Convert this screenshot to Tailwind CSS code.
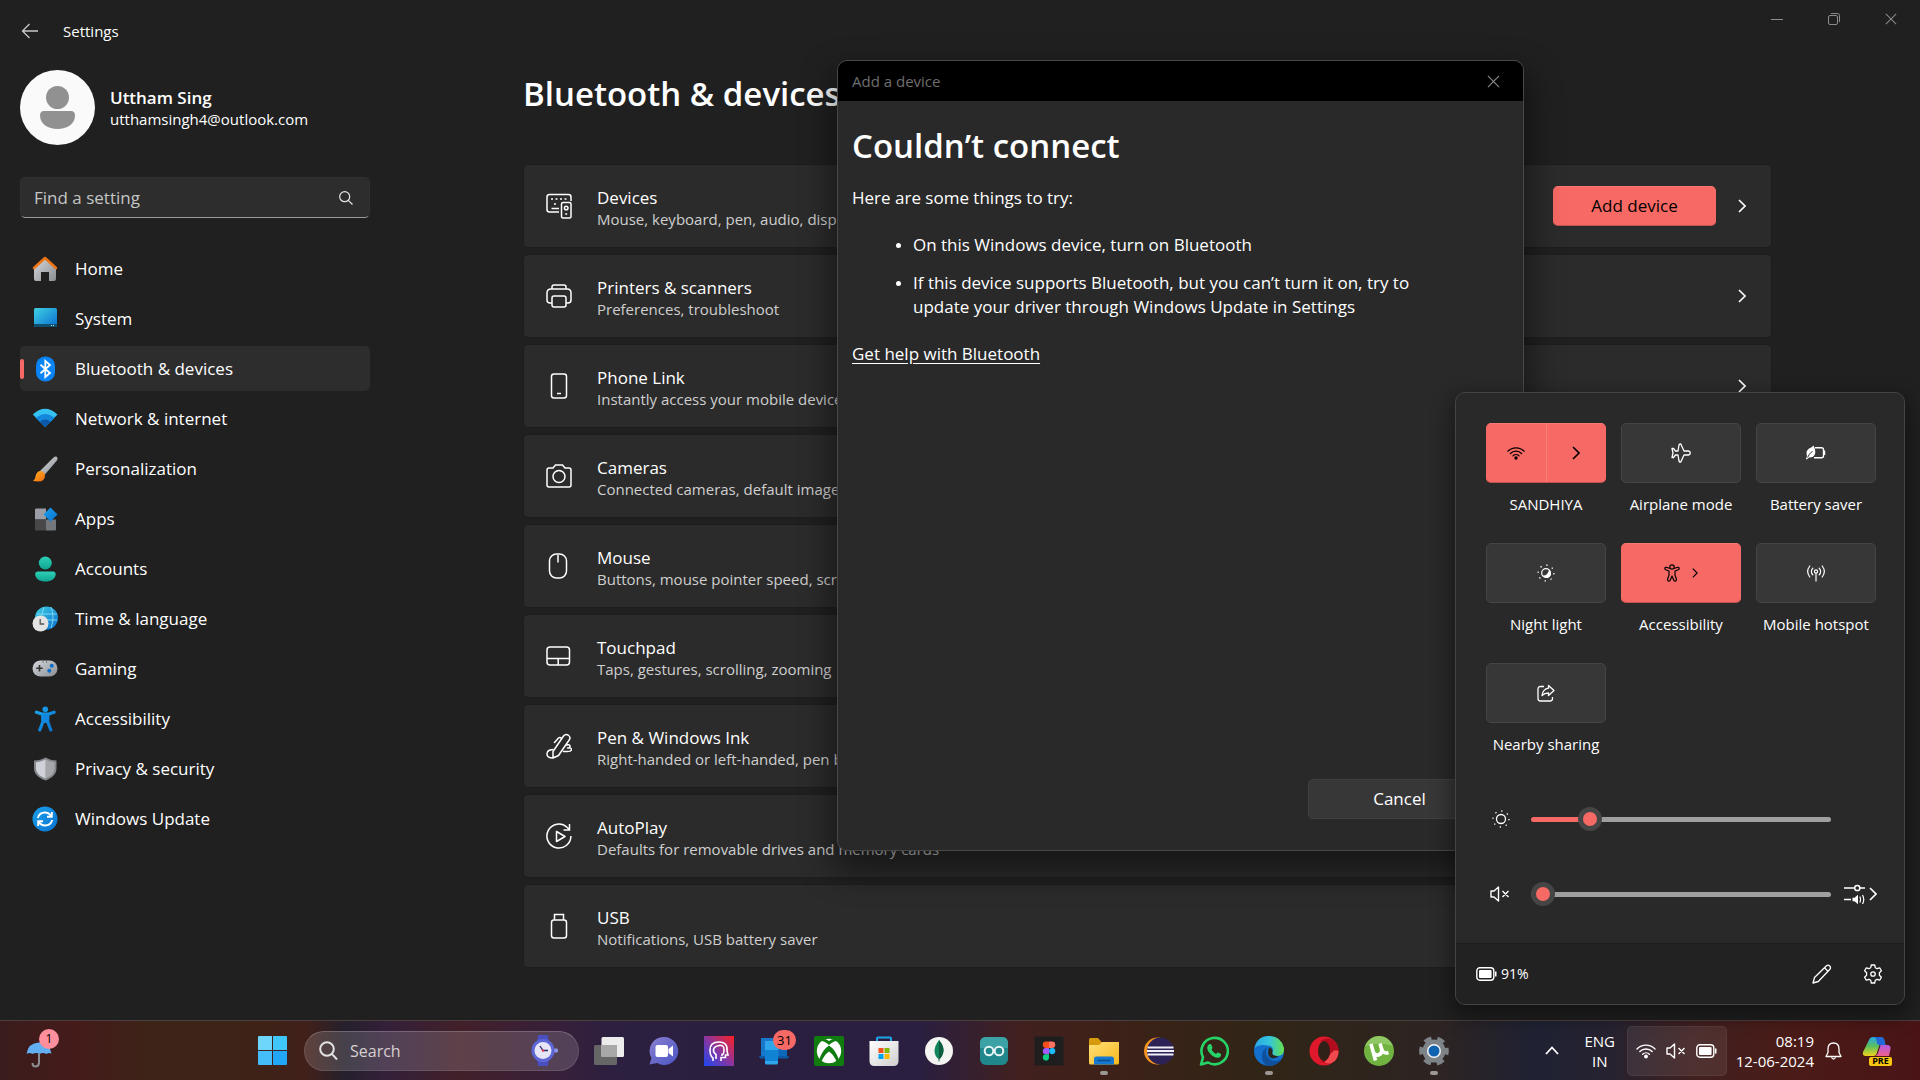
<!DOCTYPE html>
<html lang="en">
<head>
<meta charset="utf-8">
<meta name="viewport" content="width=device-width, initial-scale=1">
<title>Settings</title>
<script src="https://cdn.jsdelivr.net/npm/@tailwindcss/browser@4"></script>
</head>
<body class="relative flex min-h-screen flex-col overflow-hidden bg-[#202020] font-['Open_Sans','Noto_Sans',sans-serif] text-[17px] text-white">

<!-- Shared glyphs -->
<svg class="absolute h-0 w-0" aria-hidden="true">
  <defs>
    <linearGradient id="gSky" x1="0" y1="0" x2="1" y2="1"><stop offset="0" stop-color="#3fd0e4"/><stop offset="1" stop-color="#0a6fd0"/></linearGradient>
    <linearGradient id="gBlue" x1="0" y1="0" x2="1" y2="1"><stop offset="0" stop-color="#1ba0ea"/><stop offset="1" stop-color="#0873d2"/></linearGradient>
    <linearGradient id="gGrey" x1="0" y1="0" x2="1" y2="1"><stop offset="0" stop-color="#d5d8dc"/><stop offset="1" stop-color="#8a8d91"/></linearGradient>
    <linearGradient id="gWhite" x1="0" y1="0" x2="1" y2="1"><stop offset="0" stop-color="#ffffff"/><stop offset="1" stop-color="#cfcfcf"/></linearGradient>
    <linearGradient id="gOrange" x1="0" y1="0" x2="1" y2="1"><stop offset="0" stop-color="#ffb020"/><stop offset="1" stop-color="#f06a10"/></linearGradient>
    <linearGradient id="gTeal" x1="0" y1="0" x2="0" y2="1"><stop offset="0" stop-color="#2cd0b8"/><stop offset="1" stop-color="#12a590"/></linearGradient>
    <linearGradient id="gViolet" x1="0" y1="0" x2="1" y2="1"><stop offset="0" stop-color="#8a7fd0"/><stop offset="1" stop-color="#4a55c4"/></linearGradient>
    <linearGradient id="gNeon" x1="0" y1="1" x2="1" y2="0"><stop offset="0" stop-color="#1b48f0"/><stop offset=".5" stop-color="#8a35a0"/><stop offset="1" stop-color="#ff2020"/></linearGradient>
    <linearGradient id="gFolder" x1="0" y1="0" x2="1" y2="1"><stop offset="0" stop-color="#ffe07a"/><stop offset="1" stop-color="#f9b81c"/></linearGradient>
    <linearGradient id="gEdge" x1="0" y1="0" x2="1" y2="0"><stop offset="0" stop-color="#2aa8e6"/><stop offset=".5" stop-color="#34c4dc"/><stop offset="1" stop-color="#66e04c"/></linearGradient>
    <linearGradient id="gCopilot" x1="0" y1="0" x2="0" y2="1"><stop offset="0" stop-color="#22a7e8"/><stop offset=".5" stop-color="#5fc05a"/><stop offset="1" stop-color="#f2d21c"/></linearGradient>
    <linearGradient id="gPink" x1="0" y1="0" x2="0" y2="1"><stop offset="0" stop-color="#b35be0"/><stop offset="1" stop-color="#f0608a"/></linearGradient>
    <symbol id="chevron" viewBox="0 0 8 14"><path d="M1 1l6 6-6 6" fill="none" stroke="currentColor" stroke-width="1.6"/></symbol>
    <symbol id="close" viewBox="0 0 14 14"><path d="M1 1l12 12M13 1L1 13" fill="none" stroke="currentColor" stroke-width="1.2"/></symbol>
    <symbol id="wifi" viewBox="0 0 20 16"><g fill="none" stroke="currentColor" stroke-width="1.4" stroke-linecap="round"><path d="M1 6a12.5 12.5 0 0 1 18 0M3.800 8.600a8.700 8.700 0 0 1 12.400 0M6.600 11.200a4.900 4.900 0 0 1 6.800 0"/></g><circle cx="10" cy="13.500" r="1.900" fill="currentColor"/></symbol>
    <symbol id="mute" viewBox="0 0 20 16"><path d="M1 5h3l4.500-4v14L4 11H1zM12.500 5l6 6M18.500 5l-6 6" fill="none" stroke="currentColor" stroke-width="1.400" stroke-linejoin="round"/></symbol>
    <symbol id="battery" viewBox="0 0 21 14"><rect x=".8" y=".8" width="17" height="12.400" rx="3" fill="none" stroke="currentColor" stroke-width="1.400"/><rect x="3" y="3" width="12.600" height="8" rx="1" fill="currentColor"/><path d="M19 4.500h1.500v5H19z" fill="currentColor"/></symbol>
  </defs>
</svg>

<!-- Window title bar -->
<header class="flex h-[62px] items-start justify-between">
  <div class="flex items-center gap-6 pt-[19px] pl-[21px]">
    <button aria-label="Back" class="text-[#c8c8c8]"><svg class="h-4 w-[18px]" viewBox="0 0 18 16" fill="none" stroke="currentColor" stroke-width="1.300"><path d="M8.500 1L1.500 8l7 7M1.500 8H17"/></svg></button>
    <span class="text-[15px] leading-6">Settings</span>
  </div>
  <div class="flex text-[#8c8c8c]">
    <button aria-label="Minimize" class="flex h-[38px] w-[57px] items-center justify-center"><svg class="h-3 w-3" viewBox="0 0 12 12"><path d="M0 6.500h12" stroke="currentColor"/></svg></button>
    <button aria-label="Restore" class="flex h-[38px] w-[57px] items-center justify-center"><svg class="h-3 w-3" viewBox="0 0 12 12" fill="none" stroke="currentColor"><rect x=".5" y="2.500" width="9" height="9" rx="1.500"/><path d="M3 .5h6.500a2 2 0 0 1 2 2V9"/></svg></button>
    <button aria-label="Close" class="flex h-[38px] w-[58px] items-center justify-center"><svg class="h-3 w-3"><use href="#close"/></svg></button>
  </div>
</header>

<div class="flex grow">
  <!-- Navigation -->
  <aside class="ml-5 w-[350px] shrink-0 pt-2">
    <div class="flex items-center gap-[15px]">
      <svg class="h-[75px] w-[75px]" viewBox="0 0 75 75"><circle cx="37.500" cy="37.500" r="37.500" fill="#fafafa"/><circle cx="37.500" cy="27.500" r="11.500" fill="#919191"/><path d="M24 41h27q4 0 4 4.500C55 54 47 59 37.500 59S20 54 20 45.500Q20 41 24 41z" fill="#919191"/></svg>
      <div>
        <div class="leading-[22px] font-semibold">Uttham Sing</div>
        <div class="text-[15px] leading-5">utthamsingh4@outlook.com</div>
      </div>
    </div>
    <label class="mt-8 flex h-[41px] items-center rounded-[5px] border border-b-[#9a9a9a] border-[#303030] bg-[#2d2d2d] pr-4 pl-[13px]">
      <input type="text" aria-label="Find a setting" placeholder="Find a setting" class="min-w-0 grow bg-transparent outline-none placeholder:text-[#c5c5c5]">
      <svg class="h-[14px] w-[14px]" viewBox="0 0 14 14" fill="none" stroke="#e6e6e6" stroke-width="1.200"><circle cx="5.700" cy="5.700" r="5"/><path d="M9.300 9.300L13.500 13.500"/></svg>
    </label>
    <nav class="mt-7 flex flex-col gap-[5px]">
      <a href="#" class="flex h-[45px] items-center gap-[17px] rounded-[5px] px-3"><svg class="h-[26px] w-[26px]" viewBox="0 0 26 26"><path d="M2 11L13 2l11 9v12q0 2-2 2h-5v-9H9v9H4q-2 0-2-2z" fill="url(#gGrey)"/><path d="M2 12L13 2l11 10" fill="none" stroke="#ee7514" stroke-width="2.600" stroke-linecap="round" stroke-linejoin="round"/></svg>Home</a>
      <a href="#" class="flex h-[45px] items-center gap-[17px] rounded-[5px] px-3"><svg class="h-[26px] w-[26px]" viewBox="0 0 26 26"><rect x="2" y="2" width="23" height="19" rx="1.500" fill="url(#gSky)"/><path d="M2 18h23v1.500q0 1.500-1.500 1.500h-20Q2 21 2 19.500z" fill="#0f4f6d"/><path d="M19 19.500h1M21 19.500h1" stroke="#bfe8f5"/></svg>System</a>
      <a href="#" aria-current="page" class="relative flex h-[45px] items-center gap-[17px] rounded-[5px] bg-[#2d2d2d] px-3"><span class="absolute left-0 h-5 w-1 rounded-full bg-[#f76964]"></span><svg class="h-[26px] w-[26px]" viewBox="0 0 26 26"><rect x="4" y=".5" width="19" height="25" rx="9" fill="#0a84f5"/><path d="M8.500 8.800l9.500 8.200-4.700 4V5l4.700 4-9.500 8.200" fill="none" stroke="#fff" stroke-width="1.800"/></svg>Bluetooth &amp; devices</a>
      <a href="#" class="flex h-[45px] items-center gap-[17px] rounded-[5px] px-3"><svg class="h-[26px] w-[26px]" viewBox="0 0 26 26"><path d="M.8 8.500Q13-3 25.500 8.500L13.200 21z" fill="#35c1f1"/><path d="M4 12q9.200-8 18.500 0L13.200 21z" fill="#1487dc"/><path d="M7.800 15.700q5.400-4.500 10.800 0L13.200 21z" fill="#0d57a8"/></svg>Network &amp; internet</a>
      <a href="#" class="flex h-[45px] items-center gap-[17px] rounded-[5px] px-3"><svg class="h-[26px] w-[26px]" viewBox="0 0 26 26"><path d="M8 15L21.500 1.500q3-2 4 .5.300 1-1 3L12.500 19z" fill="url(#gGrey)"/><path d="M1 25q2-1 2.500-4.500Q4.500 15 8.500 15q4.500.5 4.500 4.500 0 6-7 6z" fill="url(#gOrange)"/></svg>Personalization</a>
      <a href="#" class="flex h-[45px] items-center gap-[17px] rounded-[5px] px-3"><svg class="h-[26px] w-[26px]" viewBox="0 0 26 26"><path d="M4 2.500h10v11H3v-10q0-1 1-1z" fill="#9a9ca6"/><path d="M3 13.500h11v11H4q-1 0-1-1z" fill="#484848"/><path d="M14 13.500h10v10q0 1-1 1h-9z" fill="#74777b"/><path d="M18.500 1.500l7 7-7 7-7-7z" fill="url(#gBlue)"/></svg>Apps</a>
      <a href="#" class="flex h-[45px] items-center gap-[17px] rounded-[5px] px-3"><svg class="h-[26px] w-[26px]" viewBox="0 0 26 26"><circle cx="13.300" cy="7" r="6.500" fill="url(#gTeal)"/><path d="M5.500 15.500h16q2.200 0 2.200 2.500c0 5-5 7.500-10.400 7.500S3.200 23 3.200 18q0-2.500 2.300-2.500z" fill="url(#gTeal)"/></svg>Accounts</a>
      <a href="#" class="flex h-[45px] items-center gap-[17px] rounded-[5px] px-3"><svg class="h-[26px] w-[26px]" viewBox="0 0 26 26"><circle cx="14.500" cy="12" r="11.500" fill="url(#gSky)"/><path d="M5 8h20M14 14h11M19 1q4 11 0 21M12 1.500q-2 5-2 8" fill="none" stroke="#8bdcf2" stroke-width=".9"/><circle cx="8.500" cy="17.500" r="8" fill="#e3e3e3"/><path d="M8.200 13v5h4" fill="none" stroke="#555" stroke-width="1.300"/></svg>Time &amp; language</a>
      <a href="#" class="flex h-[45px] items-center gap-[17px] rounded-[5px] px-3"><svg class="h-[26px] w-[26px]" viewBox="0 0 26 26"><rect x=".5" y="4.500" width="25" height="16" rx="8" fill="url(#gGrey)"/><path d="M7.500 9v6.500M4.200 12.300h6.500" stroke="#333" stroke-width="1.600"/><circle cx="19.800" cy="9.800" r="2" fill="#0b6fca"/><circle cx="17.300" cy="14.800" r="2" fill="#0b6fca"/><path d="M10.500 6h1M14 6h1" stroke="#333"/></svg>Gaming</a>
      <a href="#" class="flex h-[45px] items-center gap-[17px] rounded-[5px] px-3"><svg class="h-[26px] w-[26px]" viewBox="0 0 26 26"><circle cx="13.300" cy="3.200" r="2.800" fill="#1796e4"/><path d="M4.500 6.200l6 2h5.600l6-2M10.800 9v7L7.800 24M15.800 9v7l3 8" fill="none" stroke="url(#gBlue)" stroke-width="3.200" stroke-linecap="round" stroke-linejoin="round"/><path d="M10.500 8h5.600v9h-5.600z" fill="#1187dd"/></svg>Accessibility</a>
      <a href="#" class="flex h-[45px] items-center gap-[17px] rounded-[5px] px-3"><svg class="h-[26px] w-[26px]" viewBox="0 0 26 26"><path d="M13.500 1.500q5 3 11 3V12c0 6-4 10-11 12.500C6.500 22 2 18 2 12V4.500q6.500 0 11.500-3z" fill="#84878b"/><path d="M13.500 3.500q4.500 2.500 9 2.700V12c0 5-3 8-9 10.500z" fill="#a5a7ab"/><path d="M13.500 3.500Q8.500 6 4 6.200V12c0 5 3.500 8 9.500 10.500z" fill="#cfd2d8"/></svg>Privacy &amp; security</a>
      <a href="#" class="flex h-[45px] items-center gap-[17px] rounded-[5px] px-3"><svg class="h-[26px] w-[26px]" viewBox="0 0 26 26"><circle cx="13" cy="13" r="12.500" fill="url(#gBlue)"/><path d="M5.800 12q1.500-5.500 7-5.500 4.200 0 6.300 3.800M19.800 6v4.800H15M20.200 14q-1.500 5.500-7 5.500-4.200 0-6.300-3.800M6.200 20v-4.800H11" fill="none" stroke="#fff" stroke-width="1.900"/></svg>Windows Update</a>
    </nav>
  </aside>

  <!-- Page -->
  <main class="mr-8 ml-[153px] max-w-[1249px] min-w-0 grow pt-2">
    <h1 class="text-[33px] leading-[48px] font-semibold">Bluetooth &amp; devices</h1>
    <ul class="mt-[46px] flex flex-col gap-[6px]">
      <li class="flex h-[84px] items-center rounded-[5px] border border-[#1d1d1d] bg-[#2b2b2b] pr-[25px] pl-[22px]">
        <svg class="mr-[25px] h-[26px] w-[26px]" viewBox="0 0 26 26" fill="none" stroke="#fff" stroke-width="1.500"><path d="M13 19H3.500Q1 19 1 16.500V4Q1 1.500 3.500 1.500h19Q25 1.500 25 4v4"/><path d="M5 6h2M9.500 6h2M14 6h2M18.500 6h2M8 11h2M5.500 15.500H13"/><rect x="15.500" y="9.500" width="9.500" height="15.500" rx="1.500"/><circle cx="20.200" cy="15" r="1.800"/><path d="M19.200 21h2"/></svg>
        <div class="grow pt-1"><div class="leading-[22px]">Devices</div><div class="text-[15px] leading-5 text-[#cfcfcf]">Mouse, keyboard, pen, audio, displays and docks, other devices</div></div>
        <button class="mr-[22px] h-10 w-[163px] rounded-[5px] border border-t-[#f87873] border-b-[#c25350] border-x-[#f76964] bg-[#f76964] text-black">Add device</button>
        <svg class="h-[14px] w-2"><use href="#chevron"/></svg>
      </li>
      <li class="flex h-[84px] items-center rounded-[5px] border border-[#1d1d1d] bg-[#2b2b2b] pr-[25px] pl-[22px]">
        <svg class="mr-[25px] h-[26px] w-[26px]" viewBox="0 0 26 26" fill="none" stroke="#fff" stroke-width="1.500"><path d="M6 6V4q0-2 2-2h10q2 0 2 2v2M6 20H4q-3 0-3-3v-7q0-4 4-4h16q4 0 4 4v7q0 3-3 3h-2"/><rect x="6" y="13" width="14" height="11" rx="2"/></svg>
        <div class="grow pt-1"><div class="leading-[22px]">Printers &amp; scanners</div><div class="text-[15px] leading-5 text-[#cfcfcf]">Preferences, troubleshoot</div></div>
        <svg class="h-[14px] w-2"><use href="#chevron"/></svg>
      </li>
      <li class="flex h-[84px] items-center rounded-[5px] border border-[#1d1d1d] bg-[#2b2b2b] pr-[25px] pl-[22px]">
        <svg class="mr-[25px] h-[26px] w-[26px]" viewBox="0 0 26 26" fill="none" stroke="#fff" stroke-width="1.500"><rect x="5.500" y="1" width="15" height="24" rx="2.500"/><path d="M11 20.500h4"/></svg>
        <div class="grow pt-1"><div class="leading-[22px]">Phone Link</div><div class="text-[15px] leading-5 text-[#cfcfcf]">Instantly access your mobile device from your PC</div></div>
        <svg class="h-[14px] w-2"><use href="#chevron"/></svg>
      </li>
      <li class="flex h-[84px] items-center rounded-[5px] border border-[#1d1d1d] bg-[#2b2b2b] pr-[25px] pl-[22px]">
        <svg class="mr-[25px] h-[26px] w-[26px]" viewBox="0 0 26 26" fill="none" stroke="#fff" stroke-width="1.500"><path d="M3 5h4l2.500-3h7L19 5h4q2 0 2 2v15q0 2-2 2H3q-2 0-2-2V7q0-2 2-2z"/><circle cx="13" cy="13.500" r="6"/></svg>
        <div class="grow pt-1"><div class="leading-[22px]">Cameras</div><div class="text-[15px] leading-5 text-[#cfcfcf]">Connected cameras, default image settings</div></div>
        <svg class="h-[14px] w-2"><use href="#chevron"/></svg>
      </li>
      <li class="flex h-[84px] items-center rounded-[5px] border border-[#1d1d1d] bg-[#2b2b2b] pr-[25px] pl-[22px]">
        <svg class="mr-[25px] h-[26px] w-[26px]" viewBox="0 0 26 26" fill="none" stroke="#fff" stroke-width="1.500"><rect x="3.500" y="1" width="17" height="24" rx="7"/><path d="M12 2v7.500"/></svg>
        <div class="grow pt-1"><div class="leading-[22px]">Mouse</div><div class="text-[15px] leading-5 text-[#cfcfcf]">Buttons, mouse pointer speed, scrolling</div></div>
        <svg class="h-[14px] w-2"><use href="#chevron"/></svg>
      </li>
      <li class="flex h-[84px] items-center rounded-[5px] border border-[#1d1d1d] bg-[#2b2b2b] pr-[25px] pl-[22px]">
        <svg class="mr-[25px] h-[26px] w-[26px]" viewBox="0 0 26 26" fill="none" stroke="#fff" stroke-width="1.500"><rect x="1" y="4" width="22.500" height="18" rx="3"/><path d="M1 15.500h22.500M12.200 15.500V22"/></svg>
        <div class="grow pt-1"><div class="leading-[22px]">Touchpad</div><div class="text-[15px] leading-5 text-[#cfcfcf]">Taps, gestures, scrolling, zooming</div></div>
        <svg class="h-[14px] w-2"><use href="#chevron"/></svg>
      </li>
      <li class="flex h-[84px] items-center rounded-[5px] border border-[#1d1d1d] bg-[#2b2b2b] pr-[25px] pl-[22px]">
        <svg class="mr-[25px] h-[26px] w-[26px]" viewBox="0 0 26 26" fill="none" stroke="#fff" stroke-width="1.500" stroke-linecap="round" stroke-linejoin="round"><path d="M7 18.500L17.500 3q2-2.500 4.500-1 3 2 1.500 4.500L12.500 22.500 7 25zM7 18.500V25M8.500 9.500L12.500 5q1.500-1.200 3 .5M6.500 16.500Q1 17 1 21t6 4M20.500 12q3-1 3.500 1t-2.500 2q4-.5 4 1.500t-4 2h-4"/></svg>
        <div class="grow pt-1"><div class="leading-[22px]">Pen &amp; Windows Ink</div><div class="text-[15px] leading-5 text-[#cfcfcf]">Right-handed or left-handed, pen button shortcuts, handwriting</div></div>
        <svg class="h-[14px] w-2"><use href="#chevron"/></svg>
      </li>
      <li class="flex h-[84px] items-center rounded-[5px] border border-[#1d1d1d] bg-[#2b2b2b] pr-[25px] pl-[22px]">
        <svg class="mr-[25px] h-[26px] w-[26px]" viewBox="0 0 26 26" fill="none" stroke="#fff" stroke-width="1.500"><path d="M24.900 13A12 12 0 1 1 21 4.200l2.500 2.600M23.500 1v6H17.500"/><path d="M10.500 8.500v10l8.500-5z" stroke-linejoin="round"/></svg>
        <div class="grow pt-1"><div class="leading-[22px]">AutoPlay</div><div class="text-[15px] leading-5 text-[#cfcfcf]">Defaults for removable drives and memory cards</div></div>
        <svg class="h-[14px] w-2"><use href="#chevron"/></svg>
      </li>
      <li class="flex h-[84px] items-center rounded-[5px] border border-[#1d1d1d] bg-[#2b2b2b] pr-[25px] pl-[22px]">
        <svg class="mr-[25px] h-[26px] w-[26px]" viewBox="0 0 26 26" fill="none" stroke="#fff" stroke-width="1.500"><rect x="5.500" y="7" width="15" height="18" rx="2.500"/><path d="M8.500 7V1.500h9V7"/></svg>
        <div class="grow pt-1"><div class="leading-[22px]">USB</div><div class="text-[15px] leading-5 text-[#cfcfcf]">Notifications, USB battery saver</div></div>
        <svg class="h-[14px] w-2"><use href="#chevron"/></svg>
      </li>
    </ul>
  </main>
</div>

<!-- Taskbar -->
<footer class="flex h-[60px] shrink-0 items-center border-t border-[#4b403e] bg-[linear-gradient(90deg,#3a1c1c_0%,#451b1a_4%,#3c2418_8%,#3e2218_14%,#41201a_16%,#25202c_18%,#33203a_20%,#42202a_24%,#37203a_29%,#2c1f40_32%,#2a1f40_48%,#41201f_53%,#3e2118_57%,#302516_66%,#2d2423_75%,#1f2233_80%,#272230_84%,#3f2020_88%,#4a1c18_93%,#4a1416_100%)]">
  <button aria-label="Weather" class="relative ml-[26px] h-10 w-9 shrink-0">
    <svg class="h-10 w-9" viewBox="0 0 36 40"><path d="M.5 23Q2 12 13 11.500 24 12 25.500 23q-2.500-2-5 0-3.500-2-7 0-4-2-7 0-3-2-6 0z" fill="#62aff2"/><path d="M13 23V32q-.5 3.500-3.500 3.500T6.500 32" fill="none" stroke="#8b8f94" stroke-width="2"/></svg>
    <span class="absolute top-[-2px] right-[3px] flex h-5 w-5 items-center justify-center rounded-full bg-[#ff8f9c] text-xs text-black">1</span>
  </button>
  <button aria-label="Start" class="ml-[196px] shrink-0"><svg class="h-[29px] w-[29px]" viewBox="0 0 29 29"><path d="M0 1q0-1 1-1h13v14H0z" fill="#6fd6fb"/><path d="M15 0h13q1 0 1 1v13H15z" fill="#3fc6fb"/><path d="M0 15h14v14H1q-1 0-1-1z" fill="#45bdf8"/><path d="M15 15h14v13q0 1-1 1H15z" fill="#22a7f6"/></svg></button>
  <label class="ml-[17px] flex h-10 w-[275px] shrink-0 items-center gap-3 rounded-full border border-white/10 border-t-white/20 bg-white/15 pr-5 pl-[14px] text-base">
    <svg class="h-[19px] w-[19px] shrink-0" viewBox="0 0 19 19" fill="none" stroke="#e2e2e2" stroke-width="2"><circle cx="8" cy="8" r="6.800"/><path d="M12.800 12.800L18 18.500"/></svg>
    <input type="search" aria-label="Search" placeholder="Search" class="min-w-0 grow bg-transparent outline-none placeholder:text-[#d6cfd0]">
    <svg class="h-[31px] w-[28px] shrink-0" viewBox="0 0 28 31"><path d="M8 0h10l1 7H7zM7 24h12l-1 7H8z" fill="#4a4fc0"/><rect x="23" y="13.500" width="5" height="4" rx="1.500" fill="#8d97ea"/><circle cx="13" cy="15.500" r="11.500" fill="#5d66d6"/><circle cx="13" cy="15.500" r="8.500" fill="#e6e6f6"/><path d="M10 11l3 4.500h5" fill="none" stroke="#262a66" stroke-width="1.300"/><circle cx="13" cy="15.500" r="1.300" fill="#e04060"/></svg>
  </label>
  <div class="ml-[15px] flex shrink-0 items-center gap-[25px]">
    <button aria-label="Task view"><svg class="h-[30px] w-[30px]" viewBox="0 0 30 30"><rect y="9" width="23" height="20" rx="1.500" fill="#666"/><rect x="7.500" y="1" width="22.500" height="20" rx="1.500" fill="#ececec"/><path d="M7.500 9H23v12H7.500z" fill="#a8a8a8"/></svg></button>
    <button aria-label="Chat"><svg class="h-[30px] w-[30px]" viewBox="0 0 30 30"><path d="M15 1a14 14 0 1 1-7 26L.5 28.500 2.500 22A14 14 0 0 1 15 1z" fill="url(#gViolet)"/><rect x="6.500" y="9" width="12.500" height="12" rx="2" fill="#fff"/><path d="M19.500 13l4.500-3.500v11L19.500 17z" fill="#fff"/></svg></button>
    <button aria-label="Head studio"><svg class="h-[30px] w-[30px]" viewBox="0 0 30 30"><path d="M0 0h30v30H0z" fill="url(#gNeon)"/><path d="M9 25v-3q-3-2-3-8 0-8 9-8t8 9h-0l1 4h-2.500v2.500H17V25M12 23v-4.500q-3-2-2.500-5T15 9.500t5 4-2 5V20" fill="none" stroke="#fff" stroke-width="1.600"/></svg></button>
    <button aria-label="Phone hub, 31 notifications" class="relative"><svg class="h-[30px] w-[30px]" viewBox="0 0 30 30"><path d="M2 2h21v18H2z" fill="#1677cc"/><path d="M0 20h30l-1 2.500H1z" fill="#0b5aa6"/><path d="M20 9h8v11h-8z" fill="#0e68ba"/><path d="M6 5h13v22q0 1.500-1.500 1.500h-10Q6 28.500 6 27z" fill="#2fa6ec"/><path d="M6 14h13v11H6z" fill="#1183d5"/></svg><span class="absolute -top-[6px] -right-[7px] flex h-5 w-[23px] items-center justify-center rounded-full bg-[#f76964] text-[13px] leading-5 text-black">31</span></button>
    <button aria-label="Xbox"><svg class="h-[30px] w-[30px]" viewBox="0 0 30 30"><rect width="30" height="30" rx="2" fill="#107c10"/><circle cx="15" cy="15" r="12.200" fill="#fff"/><path d="M15 9q-5-4.500-8.500-4L9 3q3-.5 6 2 3-2.500 6-2l2.500 2Q20 4.500 15 9zM15 9.500q6.500 4 10 14.500l-2 2.500Q20 19 15 15.500 10 19 7 26.500L5 24Q8.500 13.500 15 9.500z" fill="#107c10"/></svg></button>
    <button aria-label="Store"><svg class="h-[30px] w-[30px]" viewBox="0 0 30 30"><path d="M8 6V2.500q0-1 1-1h12q1 0 1 1V6" fill="none" stroke="#1fa4e8" stroke-width="2"/><path d="M.5 5h29v20q0 5-5 5h-19q-5 0-5-5z" fill="url(#gWhite)"/><path d="M9.500 12h5v5h-5z" fill="#f1511b"/><path d="M15.500 12h5v5h-5z" fill="#80b900"/><path d="M9.500 18h5v5h-5z" fill="#00a4ef"/><path d="M15.500 18h5v5h-5z" fill="#ffb901"/></svg></button>
    <button aria-label="MongoDB"><svg class="h-[30px] w-[30px]" viewBox="0 0 30 30"><circle cx="15" cy="15" r="14" fill="#f4f5f2"/><path d="M15 4q5 6 4.500 11T15 23.500Q10.500 20 10.500 15T15 4z" fill="#13855a"/><path d="M15 4q5 6 4.500 11T15 23.500z" fill="#0d5c40"/><path d="M15 22v3.500" stroke="#3c6b58"/></svg></button>
    <button aria-label="Arduino"><svg class="h-[30px] w-[30px]" viewBox="0 0 30 30"><rect x="1" y="1" width="28" height="28" rx="6" fill="#20888c"/><path d="M1 7q0-6 6-6h16q6 0 6 6v5H1z" fill="#3ba3a6"/><circle cx="10" cy="15" r="4.300" fill="none" stroke="#e8f4f4" stroke-width="2"/><circle cx="20" cy="15" r="4.300" fill="none" stroke="#e8f4f4" stroke-width="2"/></svg></button>
    <button aria-label="Figma"><svg class="h-[30px] w-[30px]" viewBox="0 0 30 30"><rect x=".5" y=".5" width="29" height="29" rx="1" fill="#1e1e1e"/><path d="M12 5.500h3V12h-3a3.200 3.200 0 0 1 0-6.500z" fill="#f24e1e"/><path d="M15 5.500h3a3.200 3.200 0 0 1 0 6.500h-3z" fill="#ff7262"/><path d="M12 12h3v6.300h-3a3.100 3.100 0 0 1 0-6.300z" fill="#a259ff"/><circle cx="18.200" cy="15.100" r="3.100" fill="#1abcfe"/><path d="M12 18.300h3v3.100a3.100 3.100 0 1 1-3-3.100z" fill="#0acf83"/></svg></button>
    <button aria-label="File Explorer" class="relative"><svg class="h-[30px] w-[30px]" viewBox="0 0 30 30"><path d="M0 3.500Q0 2 1.500 2H9l3.500 4V11H0z" fill="#d79a0c"/><path d="M0 9h10l3-3h17v21q0 1.500-1.500 1.500h-27Q0 28.500 0 27z" fill="url(#gFolder)"/><path d="M5 23q0-2.500 2.500-2.500h15Q25 20.500 25 23v5.500H5z" fill="#1479cf"/><path d="M8.500 24.500h13" stroke="#0a4d92" stroke-width="1.600"/></svg><span class="absolute bottom-[-9px] left-[11px] h-1 w-2 rounded-full bg-[#9d9794]"></span></button>
    <button aria-label="Eclipse"><svg class="h-[30px] w-[30px]" viewBox="0 0 30 30"><circle cx="13.500" cy="15" r="13.500" fill="#f7941e"/><circle cx="16.500" cy="15" r="13.500" fill="#2c2255"/><path d="M3.500 11.500h26M3 15h27M3.500 18.500h26" stroke="#f0eff6" stroke-width="1.900"/></svg></button>
    <button aria-label="WhatsApp"><svg class="h-[30px] w-[30px]" viewBox="0 0 30 30"><path d="M2 28.500l2-7.200A13.200 13.200 0 1 1 9 26.500z" fill="none" stroke="#25d366" stroke-width="2.600" stroke-linejoin="round"/><path d="M10.500 8q1.500-.5 2 1l1 2.500q0 1-1 2 1.500 3 4.500 4.500 1.200-1.800 2.200-1.500l2.800 1.500q.5 3.500-3.500 3.800-3.500 0-7-3.800-3.500-3.500-3.300-6.500.3-2.800 2.300-3.500z" fill="#25d366"/></svg></button>
    <button aria-label="Edge" class="relative"><svg class="h-[30px] w-[30px]" viewBox="0 0 30 30"><circle cx="15" cy="15" r="15" fill="#1270cc"/><path d="M.5 12Q3 0 15 0t15 12q.5 7.500-6.500 8-6 0-5-4 2-6-5-6.500Q5 8 .5 12z" fill="url(#gEdge)"/><path d="M14 10.500q-4 4-1 9.500t9.500 5q3-.5 5-2.500-4 7.500-12.500 7.500Q8 28 8 20q0-6 6-9.500z" fill="#0f4f9c"/><path d="M15 11.500q4 1 3.500 4-1.500 5 6 4.500-3 3-7 2-5-2-2.500-10.500z" fill="#2d241c"/></svg><span class="absolute bottom-[-9px] left-[11px] h-1 w-2 rounded-full bg-[#9d9794]"></span></button>
    <button aria-label="Opera"><svg class="h-[30px] w-[30px]" viewBox="0 0 30 30"><ellipse cx="15" cy="15" rx="14.500" ry="14.500" fill="#e0182c"/><path d="M11 5q9-5 14.500 0 4 4 4 10t-4 10q-5.500 5-14.500 0 8 1 9-10Q19 4 11 5z" fill="#b20d1e"/><path d="M20 20q5-8 9.500-5 0 7-4.500 10.500-4 3.500-9.500 1z" fill="#f04a4e"/><ellipse cx="15" cy="15" rx="6" ry="10" fill="#302118"/></svg></button>
    <button aria-label="uTorrent"><svg class="h-[30px] w-[30px]" viewBox="0 0 30 30"><circle cx="15" cy="15" r="15" fill="#71b340"/><path d="M1 10Q6 0 15 0t14 10Q15 5 1 10z" fill="#8fc765"/><path d="M7 8l4.500 16.500M8.500 14q1.500 6 6 5 4-1.500 3-6.500L16 7.500m1.500 5q2 6 7 4" fill="none" stroke="#fff" stroke-width="3.600"/></svg></button>
    <button aria-label="Settings" class="relative"><svg class="h-[30px] w-[30px]" viewBox="0 0 30 30"><circle cx="15" cy="15" r="12.800" fill="none" stroke="#7e8388" stroke-width="4" stroke-dasharray="7.400 6" stroke-dashoffset="3.700"/><circle cx="15" cy="15" r="11.500" fill="#7e8388"/><circle cx="15" cy="15" r="7" fill="#f2f4f6"/><circle cx="15" cy="15" r="5.500" fill="#1063b0"/></svg><span class="absolute bottom-[-9px] left-[11px] h-1 w-2 rounded-full bg-[#9d9794]"></span></button>
  </div>
  <div class="mr-7 ml-auto flex shrink-0 items-center">
    <button aria-label="Show hidden icons"><svg class="h-[9px] w-[14px]" viewBox="0 0 14 9"><path d="M1 8l6-6.500L13 8" fill="none" stroke="#fff" stroke-width="1.800"/></svg></button>
    <button class="ml-[25px] w-8 text-[15px] leading-5">ENG IN</button>
    <button aria-label="Network, volume and battery" class="ml-[11px] flex h-[50px] w-[100px] items-center justify-center gap-[10px] rounded-[5px] border border-white/5 bg-white/8"><svg class="h-4 w-5"><use href="#wifi"/></svg><svg class="h-4 w-5"><use href="#mute"/></svg><svg class="h-[14px] w-[21px]"><use href="#battery"/></svg></button>
    <button class="ml-[9px] text-right text-[15px] leading-5">08:19<br>12-06-2024</button>
    <button aria-label="Notifications" class="ml-[11px]"><svg class="h-[18px] w-[17px]" viewBox="0 0 17 18" fill="none" stroke="#fff" stroke-width="1.300" stroke-linejoin="round"><path d="M8.500 1q5.500 0 5.500 6v3.500l2 4H1l2-4V7q0-6 5.500-6zM6.500 15.500q2 3 4 0"/></svg></button>
    <button aria-label="Copilot preview" class="relative ml-[20px]"><svg class="h-[30px] w-[30px]" viewBox="0 0 30 30"><path d="M7 4q1-3 4-3h7q4 0 4.500 4l1 4h-6l-3 9q-1 2-3 2H4Q0 20 1 16z" fill="url(#gCopilot)"/><path d="M12 1h6q4 0 4.500 4l1 4h-6q-3 0-3-5-1-3-2.500-3z" fill="#2368d8"/><path d="M19 9h6q4 0 3.500 4L27 20H13q2 0 3-3l2-6q0-2 1-2z" fill="url(#gPink)"/></svg><span class="absolute bottom-0 left-[7px] flex h-[9px] w-[23px] items-center justify-center rounded-xs bg-[#f8c510] text-[9px] font-bold text-black">PRE</span></button>
  </div>
</footer>

<!-- Add a device window -->
<section role="dialog" aria-labelledby="dialog-title" class="absolute top-[60px] left-[837px] flex h-[791px] w-[687px] flex-col overflow-hidden rounded-[10px] border border-[#484848] bg-[#292929] shadow-[0_16px_32px_6px_rgba(0,0,0,0.45)]">
  <div class="flex h-10 shrink-0 items-center justify-between bg-black pr-[23px] pl-[14px]">
    <span class="text-[15px] text-[#6e6e6e]">Add a device</span>
    <button aria-label="Close" class="text-[#8c8c8c]"><svg class="h-[13px] w-[13px]"><use href="#close"/></svg></button>
  </div>
  <div class="px-[14px] pt-[21px] leading-6">
    <h2 id="dialog-title" class="text-[33px] leading-[48px] font-semibold">Couldn’t connect</h2>
    <p class="mt-4">Here are some things to try:</p>
    <ul class="mt-[23px] list-disc pl-[61px]">
      <li class="max-w-[520px] marker:text-sm">On this Windows device, turn on Bluetooth</li>
      <li class="mt-[14px] max-w-[520px] marker:text-sm">If this device supports Bluetooth, but you can’t turn it on, try to update your driver through Windows Update in Settings</li>
    </ul>
    <a href="#" class="mt-[23px] inline-block underline underline-offset-3">Get help with Bluetooth</a>
  </div>
  <div class="mt-auto flex justify-end px-8 pb-[31px]">
    <button class="h-10 w-[183px] rounded-[5px] border border-[#3f3f3f] bg-[#373737]">Cancel</button>
  </div>
</section>

<!-- Quick settings -->
<section aria-label="Quick settings" class="absolute right-[15px] bottom-[75px] flex h-[613px] w-[450px] flex-col overflow-hidden rounded-[10px] border border-[#444] bg-[#292929] shadow-[0_8px_20px_4px_rgba(0,0,0,0.4)]">
  <div class="grid grid-cols-3 gap-x-[15px] pr-7 pl-[30px] pt-[30px] text-center text-[15px]">
    <div class="h-[120px]">
      <div class="flex h-[60px] overflow-hidden rounded-[5px] border border-t-[#f87873] border-b-[#c25350] border-x-[#f76964] bg-[#f76964] text-black">
        <button aria-label="Wi-Fi" class="flex grow basis-0 items-center justify-center border-r border-[#f87d78]"><svg class="h-4 w-[18px]"><use href="#wifi"/></svg></button>
        <button aria-label="Manage Wi-Fi connections" class="flex grow basis-0 items-center justify-center"><svg class="h-[14px] w-2"><use href="#chevron"/></svg></button>
      </div>
      <div class="mt-[11px] leading-5">SANDHIYA</div>
    </div>
    <div class="h-[120px]">
      <button aria-label="Airplane mode" class="flex h-[60px] w-full items-center justify-center rounded-[5px] border border-[#454545] bg-[#373737]"><svg class="h-5 w-5" viewBox="0 0 20 20" fill="none" stroke="#fff" stroke-width="1.300" stroke-linejoin="round"><path d="M7 8L8 2q.2-1 1.200-1h.6L13 8h4.500q1.800.5 1.800 2t-1.800 2H13L9.800 19h-.6q-1 0-1.200-1L7 12H4.500L2.500 14.500H1L2 10 1 5.500h1.500L4.500 8z"/></svg></button>
      <div class="mt-[11px] leading-5">Airplane mode</div>
    </div>
    <div class="h-[120px]">
      <button aria-label="Battery saver" class="flex h-[60px] w-full items-center justify-center rounded-[5px] border border-[#454545] bg-[#373737]"><svg class="h-4 w-5" viewBox="0 0 20 16"><path d="M9 2.700h6.500q2 0 2 2v6q0 2-2 2H8M18.500 5.500v4.500" fill="none" stroke="#fff" stroke-width="1.400"/><path d="M7.500.5q2.500 5 1.500 8.500-1.500 4-6 3.500L.8 14.500 0 14l1-3Q-.5 6 3 3.500 6 2.500 7.500.5z" fill="#fff"/><path d="M1.500 12.500Q3 9 6.500 6" fill="none" stroke="#373737"/></svg></button>
      <div class="mt-[11px] leading-5">Battery saver</div>
    </div>
    <div class="h-[120px]">
      <button aria-label="Night light" class="flex h-[60px] w-full items-center justify-center rounded-[5px] border border-[#454545] bg-[#373737]"><svg class="h-[18px] w-[18px]" viewBox="0 0 18 18"><circle cx="9" cy="9" r="4.300" fill="none" stroke="#fff" stroke-width="1.200"/><path d="M12 5.600a4.500 4.500 0 1 1-6.300 6q5.300.4 6.300-6z" fill="#fff"/><circle cx="9" cy="9" r="7.900" fill="none" stroke="#fff" stroke-width="1.300" stroke-dasharray="1.400 4.800"/></svg></button>
      <div class="mt-[11px] leading-5">Night light</div>
    </div>
    <div class="h-[120px]">
      <button aria-label="Accessibility" class="flex h-[60px] w-full items-center justify-center gap-3 rounded-[5px] border border-t-[#f87873] border-b-[#c25350] border-x-[#f76964] bg-[#f76964] text-black"><svg class="h-[18px] w-4" viewBox="0 0 16 18" fill="none" stroke="#000" stroke-width="1.200" stroke-linejoin="round"><circle cx="8" cy="3" r="2.200"/><path d="M6 4.500L2.500 3.300Q1 3 .8 4.500q0 .8 1 1.200L5 7v4l-1.500 4.500q0 1.500 1.300 1.700 1 0 1.400-1L8 12l1.800 4.200q.4 1 1.400 1 1.300-.2 1.300-1.700L11 11V7l3.200-1.300q1-.4 1-1.200-.2-1.500-1.700-1.200L10 4.500"/></svg><svg class="h-[10px] w-[6px]"><use href="#chevron"/></svg></button>
      <div class="mt-[11px] leading-5">Accessibility</div>
    </div>
    <div class="h-[120px]">
      <button aria-label="Mobile hotspot" class="flex h-[60px] w-full items-center justify-center rounded-[5px] border border-[#454545] bg-[#373737]"><svg class="h-[18px] w-[18px]" viewBox="0 0 18 18" fill="none" stroke="#fff" stroke-width="1.200" stroke-linecap="round"><circle cx="9" cy="7.500" r="1.600"/><path d="M9 9.500V17M5.800 10.800a4.500 4.500 0 0 1 0-6.600M12.200 10.800a4.500 4.500 0 0 0 0-6.600M2.800 13Q-1.500 7.500 2.800 2M15.200 13q4.300-5.500 0-11"/></svg></button>
      <div class="mt-[11px] leading-5">Mobile hotspot</div>
    </div>
    <div class="h-[120px]">
      <button aria-label="Nearby sharing" class="flex h-[60px] w-full items-center justify-center rounded-[5px] border border-[#454545] bg-[#373737]"><svg class="h-[18px] w-[18px]" viewBox="0 0 18 18" fill="none" stroke="#fff" stroke-width="1.300" stroke-linejoin="round"><path d="M7 2.500H3.500q-2.500 0-2.500 2.500v9.500Q1 17 3.500 17H13q2.500 0 2.500-2.500V13"/><path d="M11.500 1.500L17 6.500l-5.500 5V9Q7.500 9 5 11.500 6 5 11.500 4.200z"/></svg></button>
      <div class="mt-[11px] leading-5">Nearby sharing</div>
    </div>
  </div>
  <div class="mt-6 flex h-6 items-center pl-9">
    <svg class="h-[18px] w-[18px]" viewBox="0 0 18 18" fill="none" stroke="#fff" stroke-width="1.300"><circle cx="9" cy="9" r="4.500"/><circle cx="9" cy="9" r="8" stroke-dasharray="1.300 4.980"/></svg>
    <input type="range" aria-label="Brightness" min="0" max="100" value="17" class="ml-[21px] h-[5px] w-[300px] appearance-none rounded-full bg-[#9f9f9f] [&::-webkit-slider-thumb]:h-6 [&::-webkit-slider-thumb]:w-6 [&::-webkit-slider-thumb]:appearance-none [&::-webkit-slider-thumb]:rounded-full [&::-webkit-slider-thumb]:border-[5px] [&::-webkit-slider-thumb]:border-solid [&::-webkit-slider-thumb]:border-[#454545] [&::-webkit-slider-thumb]:bg-[#f76964]" style="background-image:linear-gradient(90deg,#f76964 19%,transparent 19%)">
  </div>
  <div class="mt-[51px] flex h-6 items-center pl-[34px]">
    <svg class="h-4 w-5"><use href="#mute"/></svg>
    <input type="range" aria-label="Volume" min="0" max="100" value="0" class="ml-[21px] h-[5px] w-[300px] appearance-none rounded-full bg-[#9f9f9f] [&::-webkit-slider-thumb]:h-6 [&::-webkit-slider-thumb]:w-6 [&::-webkit-slider-thumb]:appearance-none [&::-webkit-slider-thumb]:rounded-full [&::-webkit-slider-thumb]:border-[5px] [&::-webkit-slider-thumb]:border-solid [&::-webkit-slider-thumb]:border-[#454545] [&::-webkit-slider-thumb]:bg-[#f76964]">
    <button aria-label="Select a sound output" class="ml-[13px] flex items-center gap-1"><svg class="h-5 w-[21px]" viewBox="0 0 21 20" fill="none" stroke="#fff" stroke-width="1.500"><path d="M0 4h10.500M16 4h5M0 15.500h7"/><circle cx="13.300" cy="4" r="2.600"/><path d="M8.500 13.800h2l3.500-3v9.400l-3.500-3h-2z" fill="#fff" stroke="none"/><path d="M15.800 12.500q1.500 3 0 6M18.500 11q2.500 4.500 0 9" stroke-width="1.200"/></svg><svg class="h-[14px] w-2"><use href="#chevron"/></svg></button>
  </div>
  <div class="mt-auto flex h-[61px] items-center border-t border-[#1c1c1c] bg-[#222] pr-[21px] pl-5 text-sm">
    <svg class="mr-1 h-[14px] w-[21px]"><use href="#battery"/></svg>91%
    <button aria-label="Edit quick settings" class="ml-auto"><svg class="h-5 w-5" viewBox="0 0 20 20" fill="none" stroke="#fff" stroke-width="1.300" stroke-linejoin="round"><path d="M1 19l1.500-5.500L14.500 1.800q1.700-1.300 3.200.2t.2 3.200L6.300 17.500zM12.500 3.800l3.600 3.600"/></svg></button>
    <button aria-label="All settings" class="ml-[31px]"><svg class="h-5 w-5" viewBox="0 0 20 20" fill="none" stroke="#fff" stroke-width="1.300" stroke-linejoin="round"><circle cx="10" cy="10" r="2.200"/><path d="M8.300 1h3.400l.6 2.700 1.700 1 2.700-.9 1.700 3-2 1.900v2.600l2 1.900-1.700 3-2.700-.9-1.700 1-.6 2.700H8.300l-.6-2.700-1.700-1-2.700.9-1.700-3 2-1.900V8.700l-2-1.900 1.700-3 2.700.9 1.700-1z"/></svg></button>
  </div>
</section>
</body>
</html>
